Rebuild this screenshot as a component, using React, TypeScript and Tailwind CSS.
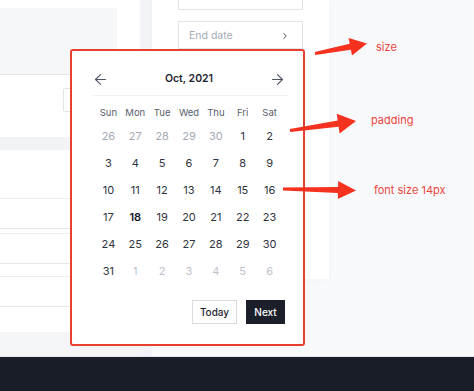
import { ArrowLeft, ArrowRight, ChevronRight } from "lucide-react";

type Day = { n: number; kind: "prev" | "cur" | "next" | "today" };

const weekdays = ["Sun", "Mon", "Tue", "Wed", "Thu", "Fri", "Sat"];

function buildDays(): Day[] {
  const days: Day[] = [];
  [26, 27, 28, 29, 30].forEach((n) => days.push({ n, kind: "prev" }));
  for (let n = 1; n <= 31; n++) days.push({ n, kind: n === 18 ? "today" : "cur" });
  for (let n = 1; n <= 6; n++) days.push({ n, kind: "next" });
  return days;
}

const dayColor: Record<Day["kind"], string> = {
  prev: "text-[#a4aab5]",
  cur: "text-[#2f3440]",
  next: "text-[#bcc1c9]",
  today: "text-[#111827] font-semibold",
};

// tapered annotation arrow, tail -> tip
function arrowPoints(tx: number, ty: number, hx: number, hy: number, headLen: number, headHalf: number, tailW: number, neckW: number) {
  const dx = hx - tx;
  const dy = hy - ty;
  const len = Math.hypot(dx, dy);
  const ux = dx / len;
  const uy = dy / len;
  const px = -uy;
  const py = ux;
  const bx = hx - ux * headLen;
  const by = hy - uy * headLen;
  const pts = [
    [tx + px * tailW, ty + py * tailW],
    [bx + px * neckW, by + py * neckW],
    [bx + px * headHalf, by + py * headHalf],
    [hx, hy],
    [bx - px * headHalf, by - py * headHalf],
    [bx - px * neckW, by - py * neckW],
    [tx - px * tailW, ty - py * tailW],
  ];
  return pts.map((p) => p.map((v) => v.toFixed(1)).join(",")).join(" ");
}

function Calendar() {
  const days = buildDays();
  return (
    <div className="absolute left-[70px] top-[49px] w-[235px] h-[297px] bg-white border-2 border-[#e8402f] rounded-[3px] pl-[23px] pr-[20px] pt-[17px] flex flex-col">
      <div className="h-[22px] flex items-center justify-between">
        <ArrowLeft size={17} strokeWidth={1.5} className="text-[#4b5263] -ml-[3px]" />
        <span className="text-[10.5px] font-semibold text-[#1f2430]">Oct, 2021</span>
        <ArrowRight size={17} strokeWidth={1.5} className="text-[#4b5263] -mr-[3px]" />
      </div>
      <div className="mt-[5px] h-px bg-[#f0f1f4] -ml-[3px] -mr-[5px]" />
      <div className="mt-[7px] grid grid-cols-7 h-[20px] items-center text-center text-[9.5px] text-[#585e6b]">
        {weekdays.map((w) => (
          <span key={w}>{w}</span>
        ))}
      </div>
      <div className="grid grid-cols-7 auto-rows-[27px] items-center text-center text-[11px]">
        {days.map((d, i) => (
          <span key={i} className={dayColor[d.kind]}>
            {d.n}
          </span>
        ))}
      </div>
      <div className="mt-[15px] flex justify-end gap-[9px] -mr-[2px]">
        <button className="h-[24px] w-[45px] border border-[#d8dbe0] bg-white text-[10px] font-medium text-[#1f2430]">
          Today
        </button>
        <button className="h-[24px] w-[39px] bg-[#1b1f2a] text-[10px] font-medium text-white">
          Next
        </button>
      </div>
    </div>
  );
}

function Annotations() {
  return (
    <>
      <svg className="absolute inset-0 pointer-events-none" width={474} height={391} viewBox="0 0 474 391">
        <polygon fill="#f4321f" points={arrowPoints(315, 53.5, 367, 43.5, 17, 9, 1.4, 3)} />
        <polygon fill="#f4321f" points={arrowPoints(290, 130.5, 356, 121, 18, 10, 1.6, 3.2)} />
        <polygon fill="#f4321f" points={arrowPoints(283, 189, 356, 190.5, 18, 9, 1.6, 3)} />
      </svg>
      <span className="absolute left-[376px] top-[39px] text-[11px] leading-[16px] text-[#e8463b]">size</span>
      <span className="absolute left-[371px] top-[112px] text-[11px] leading-[16px] text-[#e8463b]">padding</span>
      <span className="absolute left-[374px] top-[182px] text-[11px] leading-[16px] text-[#e8463b]">font size 14px</span>
    </>
  );
}

export default function App() {
  return (
    <div className="relative w-[474px] h-[391px] overflow-hidden bg-[#f8f9fb]" style={{ fontFamily: "Inter, 'Noto Sans', sans-serif" }}>
      <div className="flex h-[356px]">
        {/* left list panel */}
        <div className="w-[140px] flex flex-col bg-[#f4f5f7]">
          <div className="bg-white h-[332px] flex flex-col">
            <div className="h-[75px] pt-[8px] pr-[23px] border-b border-[#e4e6ea]">
              <div className="h-full bg-[#f6f7f9]" />
            </div>
            <div className="h-[62px] pl-[63px] pt-[13px]">
              <div className="h-[24px] border border-[#e2e4e8] rounded-[2px]" />
            </div>
            <div className="h-[13px] bg-[#f2f3f6]" />
            <div className="h-[49px] border-b border-[#eceef1]" />
            <div className="h-[30px] border-b border-[#e6e8ec]" />
            <div className="h-[5px] border-b border-[#eceef1]" />
            <div className="h-[30px] border-b border-[#e6e8ec]" />
            <div className="h-[13px] border-b border-[#eceef1]" />
            <div className="h-[30px] border-b border-[#e6e8ec]" />
          </div>
        </div>
        <div className="w-[12px] bg-[#f3f4f7]" />
        {/* form card */}
        <div className="w-[177px] h-[279px] bg-white px-[26px] shadow-[0_0_6px_rgba(0,0,0,0.03)]">
          <div className="h-[10px] border border-t-0 border-[#e2e4e8]" />
          <div className="mt-[11px] h-[28px] border border-[#e2e4e8] flex items-center justify-between pl-[10px] pr-[12px] pt-[2px]">
            <span className="text-[10.5px] text-[#a3a9b4]">End date</span>
            <ChevronRight size={10} strokeWidth={2.2} className="text-[#3a3f4b]" />
          </div>
        </div>
        <div className="flex-1" />
      </div>
      <div className="h-px bg-[#e6e8ec]" />
      <div className="h-[34px] bg-[#181d27]" />
      <Calendar />
      <Annotations />
    </div>
  );
}
